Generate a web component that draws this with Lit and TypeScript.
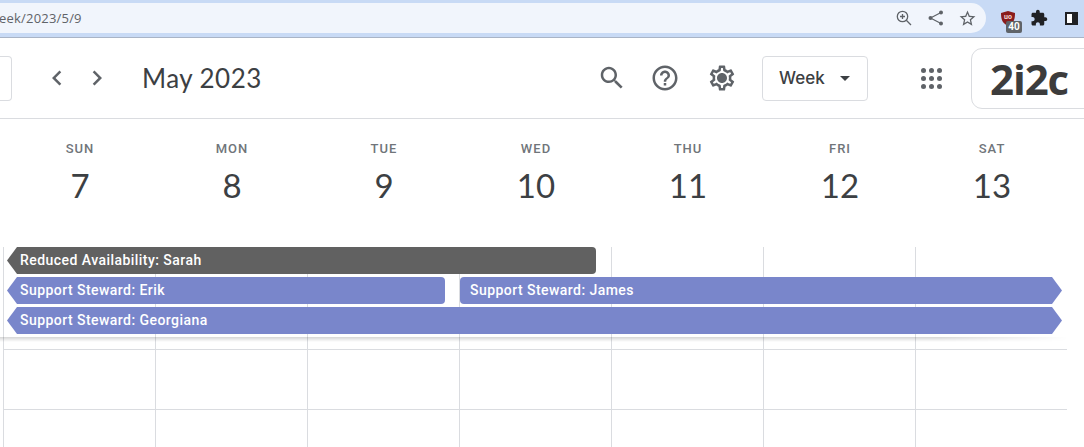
import { LitElement, html, css, svg } from 'lit';
import { customElement } from 'lit/decorators.js';

const ICONS = {
  search: 'M15.5 14h-.79l-.28-.27C15.41 12.59 16 11.11 16 9.5 16 5.91 13.09 3 9.5 3S3 5.91 3 9.5 5.91 16 9.5 16c1.61 0 3.09-.59 4.23-1.57l.27.28v.79l5 4.99L20.49 19l-4.99-5zm-6 0C7.01 14 5 11.99 5 9.5S7.01 5 9.5 5 14 7.01 14 9.5 11.99 14 9.5 14z',
  help: 'M11 18h2v-2h-2v2zm1-16C6.48 2 2 6.48 2 12s4.48 10 10 10 10-4.48 10-10S17.52 2 12 2zm0 18c-4.41 0-8-3.59-8-8s3.59-8 8-8 8 3.59 8 8-3.59 8-8 8zm0-14c-2.21 0-4 1.79-4 4h2c0-1.1.9-2 2-2s2 .9 2 2c0 2-3 1.75-3 5h2c0-2.25 3-2.5 3-5 0-2.21-1.79-4-4-4z',
  gear: 'M19.43 12.98c.04-.32.07-.64.07-.98 0-.34-.03-.66-.07-.98l2.11-1.65c.19-.15.24-.42.12-.64l-2-3.46c-.09-.16-.26-.25-.44-.25-.06 0-.12.01-.17.03l-2.49 1c-.52-.4-1.08-.73-1.69-.98l-.38-2.65C14.46 2.18 14.25 2 14 2h-4c-.25 0-.46.18-.49.42l-.38 2.65c-.61.25-1.17.59-1.69.98l-2.49-1c-.06-.02-.12-.03-.18-.03-.17 0-.34.09-.43.25l-2 3.46c-.13.22-.07.49.12.64l2.11 1.65c-.04.32-.07.65-.07.98 0 .33.03.66.07.98l-2.11 1.65c-.19.15-.24.42-.12.64l2 3.46c.09.16.26.25.44.25.06 0 .12-.01.17-.03l2.49-1c.52.4 1.08.73 1.69.98l.38 2.65c.03.24.24.42.49.42h4c.25 0 .46-.18.49-.42l.38-2.65c.61-.25 1.17-.59 1.69-.98l2.49 1c.06.02.12.03.18.03.17 0 .34-.09.43-.25l2-3.46c.12-.22.07-.49-.12-.64l-2.11-1.65zm-1.98-1.71c.04.31.05.52.05.73 0 .21-.02.43-.05.73l-.14 1.13.89.7 1.08.84-.7 1.21-1.27-.51-1.04-.42-.9.68c-.43.32-.84.56-1.25.73l-1.06.43-.16 1.13-.2 1.35h-1.4l-.19-1.35-.16-1.13-1.06-.43c-.43-.18-.83-.41-1.23-.71l-.91-.7-1.06.43-1.27.51-.7-1.21 1.08-.84.89-.7-.14-1.13c-.03-.31-.05-.54-.05-.74s.02-.43.05-.73l.14-1.13-.89-.7-1.08-.84.7-1.21 1.27.51 1.04.42.9-.68c.43-.32.84-.56 1.25-.73l1.06-.43.16-1.13.2-1.35h1.39l.19 1.35.16 1.13 1.06.43c.43.18.83.41 1.23.71l.91.7 1.06-.43 1.27-.51.7 1.21-1.07.85-.89.7.14 1.13zM12 8c-2.21 0-4 1.79-4 4s1.79 4 4 4 4-1.79 4-4-1.79-4-4-4z',
  left: 'M15.41 7.41 14 6l-6 6 6 6 1.41-1.41L10.83 12z',
  right: 'M10 6 8.59 7.41 13.17 12l-4.58 4.59L10 18l6-6z',
  star: 'M22 9.24l-7.19-.62L12 2 9.19 8.63 2 9.24l5.46 4.73L5.82 21 12 17.27 18.18 21l-1.63-7.03L22 9.24zM12 15.4l-3.76 2.27 1-4.28-3.32-2.88 4.38-.38L12 6.1l1.71 4.04 4.38.38-3.32 2.88 1 4.28L12 15.4z',
  puzzle: 'M20.5 11H19V7c0-1.1-.9-2-2-2h-4V3.5C13 2.12 11.88 1 10.5 1S8 2.12 8 3.5V5H4c-1.1 0-1.99.9-1.99 2v3.8H3.5c1.49 0 2.7 1.21 2.7 2.7s-1.21 2.7-2.7 2.7H2V20c0 1.1.9 2 2 2h3.8v-1.5c0-1.49 1.21-2.7 2.7-2.7 1.49 0 2.7 1.21 2.7 2.7V22H17c1.1 0 2-.9 2-2v-4h1.5c1.38 0 2.5-1.12 2.5-2.5S21.88 11 20.5 11z',
};

const icon = (name: keyof typeof ICONS, size: number, cls = '') => html`
  <svg class="icon ${cls}" width=${size} height=${size} viewBox="0 0 24 24">
    ${svg`<path d=${ICONS[name]} />`}
  </svg>`;

const DAYS = [
  ['SUN', '7'], ['MON', '8'], ['TUE', '9'], ['WED', '10'],
  ['THU', '11'], ['FRI', '12'], ['SAT', '13'],
];

@customElement('app-root')
export class AppRoot extends LitElement {
  static styles = css`
    :host {
      display: block;
      width: 1084px;
      height: 447px;
      overflow: hidden;
      background: #fff;
      font-family: Roboto, sans-serif;
    }

    .icon { display: block; fill: currentColor; flex: none; }
    .line { fill: none; stroke: currentColor; }

    /* browser chrome */
    .chrome {
      background: #c8daf5;
      border-bottom: 1px solid #a9b4c6;
      padding-top: 3px;
      box-sizing: border-box;
      height: 38px;
      display: flex;
    }
    .omnibox {
      width: 986px;
      height: 30px;
      background: #f1f5fc;
      border-radius: 0 15px 15px 0;
      display: flex;
      align-items: center;
      color: #5f6368;
      font: 13px/30px "Open Sans", sans-serif;
      flex: none;
    }
    .url { flex: 1; margin-left: -1px; letter-spacing: 0.2px; }
    .omni-actions { display: flex; align-items: center; gap: 12px; margin-right: 9px; color: #5f6368; }
    .ext { display: flex; align-items: center; margin-left: 15px; height: 30px; }
    .ublock { position: relative; width: 14px; height: 15px; color: #8a1c1c; }
    .ublock text { fill: #f3d6d6; font: 700 7px Roboto, sans-serif; }
    .badge {
      position: absolute;
      left: 5px;
      top: 10px;
      width: 16px;
      height: 12px;
      background: #5f6368;
      color: #fff;
      border-radius: 2px;
      font: 700 10px/12px Roboto, sans-serif;
      text-align: center;
    }
    .puzzle { margin-left: 15px; color: #202124; }
    .side {
      margin-left: 17px;
      width: 5px;
      height: 9px;
      background: #fff;
      border: 2px solid #202124;
      border-right-width: 6px;
      flex: none;
    }

    /* calendar header */
    .toolbar {
      height: 81px;
      box-sizing: border-box;
      border-bottom: 1px solid #dadce0;
      display: flex;
      align-items: center;
      color: #5f6368;
    }
    .today {
      width: 12px;
      height: 45px;
      box-sizing: border-box;
      border: 1px solid #dadce0;
      border-left: 0;
      border-radius: 0 4px 4px 0;
      margin-right: 30px;
      flex: none;
    }
    .nav { display: flex; gap: 10px; }
    .month {
      margin-left: 30px;
      flex: 1;
      font: 400 26px/32px Lato, sans-serif;
      color: #3c4043;
      letter-spacing: 0.45px;
    }
    .actions { display: flex; align-items: center; }
    .actions .icon + .icon { margin-left: 27px; }
    .actions .icon:nth-child(2) { margin-left: 23px; }
    .week {
      width: 106px;
      height: 45px;
      box-sizing: border-box;
      border: 1px solid #dadce0;
      border-radius: 4px;
      margin-left: 25px;
      padding-left: 16px;
      display: flex;
      align-items: center;
      font: 500 17px Inter, Roboto, sans-serif;
      color: #3c4043;
      flex: none;
    }
    .caret {
      width: 0;
      height: 0;
      border: 5px solid transparent;
      border-top-color: #3c4043;
      border-bottom: 0;
      margin-left: 15px;
    }
    .apps {
      margin-left: 53px;
      display: grid;
      grid-template-columns: repeat(3, 5px);
      gap: 3px;
    }
    .apps i { width: 5px; height: 5px; border-radius: 50%; background: #5f6368; display: block; }
    .logo {
      margin-left: 29px;
      margin-right: -17px;
      width: 130px;
      height: 61px;
      flex: none;
      box-sizing: border-box;
      border: 1px solid #dadce0;
      border-radius: 11px;
      padding-left: 18px;
      font: 700 42px/59px "Open Sans", sans-serif;
      color: #3c3c3c;
      letter-spacing: -1.1px;
    }

    /* week grid */
    .days {
      display: grid;
      grid-template-columns: repeat(7, 152px);
      margin-left: 4px;
      height: 128px;
      text-align: center;
      color: #70757a;
    }
    .dow { font: 500 13px/16px Roboto, sans-serif; letter-spacing: 1px; margin-top: 22px; }
    .dnum { font: 400 33px/36px Lato, sans-serif; color: #3c4043; margin-top: 10px; }

    .allday {
      display: grid;
      grid-template-columns: repeat(7, 152px);
      grid-template-rows: 27px 27px 27px;
      row-gap: 3px;
      padding-bottom: 4px;
      margin-left: 3px;
      width: 1065px;
      position: relative;
    }
    .allday::after {
      content: '';
      position: absolute;
      left: -3px;
      right: 0;
      top: calc(100% - 1px);
      height: 5px;
      background: linear-gradient(rgba(0, 0, 0, 0.16), rgba(0, 0, 0, 0));
      -webkit-mask-image: linear-gradient(90deg, #000 88%, transparent);
      mask-image: linear-gradient(90deg, #000 88%, transparent);
    }
    .cell { grid-row: 1 / 4; border-left: 1px solid #dadce0; margin-bottom: -4px; }
    .event {
      z-index: 1;
      display: flex;
      align-items: center;
      color: #fff;
      font: 500 14px/27px Roboto, sans-serif;
      letter-spacing: 0.45px;
      white-space: nowrap;
      overflow: hidden;
      background: #7986cb;
      border-radius: 4px;
      padding-left: 10px;
    }
    .event.grey { background: #616161; }
    .arrow-left {
      margin-left: 4px;
      padding-left: 13px;
      border-radius: 0 4px 4px 0;
      clip-path: polygon(10px 0, 100% 0, 100% 100%, 10px 100%, 0 50%);
    }
    .arrow-right {
      margin-right: 5px;
      border-radius: 4px 0 0 4px;
      clip-path: polygon(0 0, calc(100% - 10px) 0, 100% 50%, calc(100% - 10px) 100%, 0 100%);
    }
    .arrow-left.arrow-right {
      border-radius: 0;
      clip-path: polygon(10px 0, calc(100% - 10px) 0, 100% 50%, calc(100% - 10px) 100%, 10px 100%, 0 50%);
    }

    .timegrid {
      margin-left: 3px;
      width: 1065px;
      height: 109px;
      display: grid;
      grid-template-columns: repeat(7, 152px);
      grid-template-rows: 12px 60px 37px;
    }
    .slot { border-left: 1px solid #dadce0; border-bottom: 1px solid #dadce0; box-sizing: border-box; }
    .slot.last { border-bottom: 0; }
  `;

  render() {
    return html`
      <div class="chrome">
        <div class="omnibox">
          <span class="url">eek/2023/5/9</span>
          <div class="omni-actions">
            <svg class="icon" width="20" height="20" viewBox="0 0 20 20">
              <circle class="line" cx="8.500" cy="8.500" r="5.200" stroke-width="1.300" />
              <path class="line" stroke-width="1.300" d="M12.300 12.300 17 17M6 8.500h5M8.500 6v5" />
            </svg>
            <svg class="icon" width="20" height="20" viewBox="0 0 20 20">
              <circle cx="4.500" cy="10" r="2" />
              <circle cx="15" cy="4.500" r="2" />
              <circle cx="15" cy="15.500" r="2" />
              <path class="line" stroke-width="1.200" d="M15 4.500 4.500 10 15 15.500" />
            </svg>
            ${icon('star', 19)}
          </div>
        </div>
        <div class="ext">
          <div class="ublock">
            <svg class="icon" width="14" height="15" viewBox="0 0 14 15">
              <path d="M7 0 14 2c0 6-1 10-7 13C1 12 0 8 0 2z" />
              <text x="7" y="8" text-anchor="middle">uo</text>
            </svg>
            <span class="badge">40</span>
          </div>
          ${icon('puzzle', 18, 'puzzle')}
          <div class="side"></div>
        </div>
      </div>

      <div class="toolbar">
        <div class="today"></div>
        <div class="nav">
          ${icon('left', 30)}
          ${icon('right', 30)}
        </div>
        <div class="month">May 2023</div>
        <div class="actions">
          ${icon('search', 30)}
          ${icon('help', 30)}
          ${icon('gear', 30)}
        </div>
        <div class="week">Week<span class="caret"></span></div>
        <div class="apps">${Array.from({ length: 9 }, () => html`<i></i>`)}</div>
        <div class="logo">2i2c</div>
      </div>

      <div class="days">
        ${DAYS.map(([d, n]) => html`
          <div><div class="dow">${d}</div><div class="dnum">${n}</div></div>
        `)}
      </div>

      <div class="allday">
        ${DAYS.map((_, i) => html`<div class="cell" style="grid-column: ${i + 1}"></div>`)}
        <div class="event grey arrow-left" style="grid-row: 1; grid-column: 1 / 5; margin-right: 15px">Reduced Availability: Sarah</div>
        <div class="event arrow-left" style="grid-row: 2; grid-column: 1 / 4; margin-right: 14px">Support Steward: Erik</div>
        <div class="event arrow-right" style="grid-row: 2; grid-column: 4 / 8; margin-left: 1px">Support Steward: James</div>
        <div class="event arrow-left arrow-right" style="grid-row: 3; grid-column: 1 / 8">Support Steward: Georgiana</div>
      </div>

      <div class="timegrid">
        ${[0, 1, 2].map(r => DAYS.map(() => html`<div class="slot ${r === 2 ? 'last' : ''}"></div>`))}
      </div>
    `;
  }
}
